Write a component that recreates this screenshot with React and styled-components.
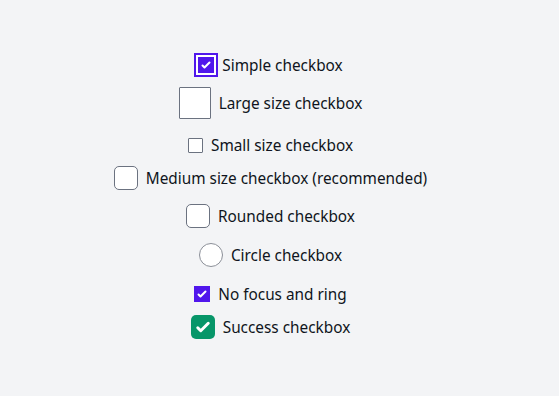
import React from "react";
import styled, { createGlobalStyle } from "styled-components";

const GlobalStyle = createGlobalStyle`
  html, body {
    margin: 0;
    padding: 0;
    background: #f3f4f6;
  }
  body {
    font-family: "Noto Sans", "Liberation Sans", sans-serif;
    color: #0f1420;
  }
`;

const Page = styled.div`
  width: 541px;
  height: 396px;
  display: flex;
  flex-direction: column;
  align-items: center;
  padding-top: 53px;
  box-sizing: border-box;
`;

const Row = styled.label`
  display: flex;
  align-items: center;
  gap: 8px;
  height: ${p => p.h || 24}px;
  margin-top: ${p => p.mt || 0}px;
  font-size: 15.35px;
  line-height: 24px;
  cursor: pointer;
`;

const Box = styled.span`
  flex: none;
  display: flex;
  align-items: center;
  justify-content: center;
  box-sizing: border-box;
  width: ${p => p.size}px;
  height: ${p => p.size}px;
  border-radius: ${p => p.radius || 0}px;
  background: ${p => (p.checked ? p.color : "#fff")};
  border: ${p => (p.checked ? "none" : `1px solid ${p.borderColor || "#6b7280"}`)};
  box-shadow: ${p => (p.ring ? `0 0 0 2px #fff, 0 0 0 4px ${p.color}` : "none")};

  svg {
    width: ${p => p.iconSize || p.size}px;
    height: ${p => p.iconSize || p.size}px;
    fill: #fff;
  }
`;

const Check = () => (
  <svg viewBox="0 0 16 16" aria-hidden="true">
    <path d="M12.207 4.793a1 1 0 010 1.414l-5 5a1 1 0 01-1.414 0l-2-2a1 1 0 011.414-1.414L6.5 9.086l4.293-4.293a1 1 0 011.414 0z" />
  </svg>
);

const PURPLE = "#5016ec";
const GREEN = "#079669";

const items = [
  { label: "Simple checkbox", size: 16, checked: true, ring: true, color: PURPLE, mt: 0 },
  { label: "Large size checkbox", size: 32, h: 32, mt: 10, radius: 1 },
  { label: "Small size checkbox", size: 15, mt: 14, radius: 1 },
  { label: "Medium size checkbox (recommended)", size: 24, mt: 9, radius: 5 },
  { label: "Rounded checkbox", size: 24, mt: 14, radius: 5 },
  { label: "Circle checkbox", size: 24, mt: 15, radius: 12, borderColor: "#8b8f98" },
  { label: "No focus and ring", size: 16, mt: 15, checked: true, color: PURPLE },
  { label: "Success checkbox", size: 24, mt: 9, checked: true, color: GREEN, radius: 5, iconSize: 26 },
];

export default function App() {
  return (
    <>
      <GlobalStyle />
      <Page>
        {items.map(item => (
          <Row key={item.label} h={item.h} mt={item.mt}>
            <Box
              size={item.size}
              radius={item.radius}
              checked={item.checked}
              color={item.color}
              ring={item.ring}
              borderColor={item.borderColor}
              iconSize={item.iconSize}
            >
              {item.checked && <Check />}
            </Box>
            <span>{item.label}</span>
          </Row>
        ))}
      </Page>
    </>
  );
}
